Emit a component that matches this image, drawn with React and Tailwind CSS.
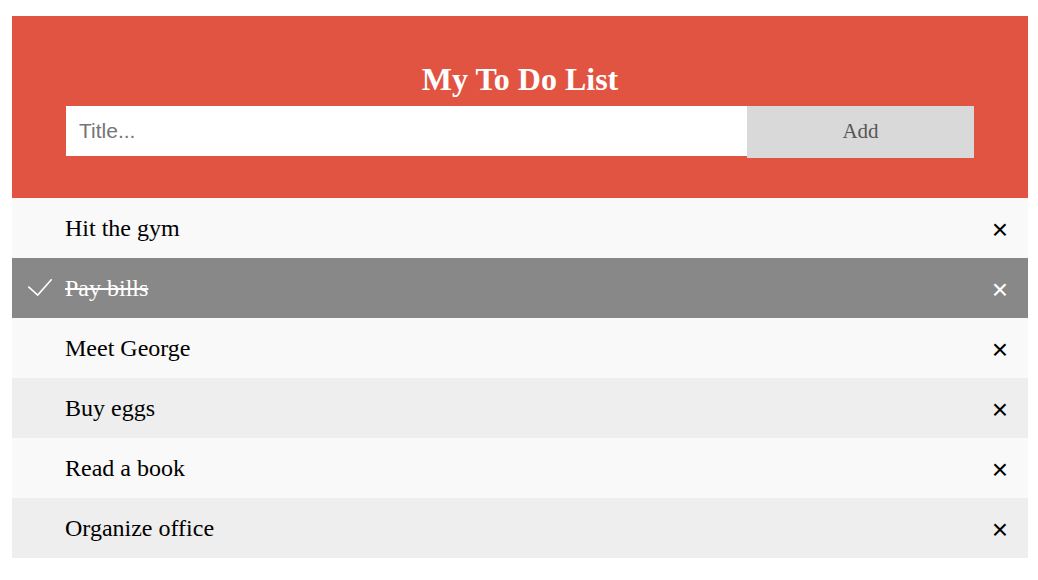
const TODOS = [
  { title: 'Hit the gym', done: false },
  { title: 'Pay bills', done: true },
  { title: 'Meet George', done: false },
  { title: 'Buy eggs', done: false },
  { title: 'Read a book', done: false },
  { title: 'Organize office', done: false },
]

function Check() {
  return (
    <svg width="53" height="60" viewBox="0 0 53 60" className="block">
      <polyline points="16.3,28.7 25.7,37 39.7,21.3" fill="none" stroke="#fff" strokeWidth="1.6" />
    </svg>
  )
}

export default function App() {
  return (
    <div className="ml-[12px] mr-[10px] mt-[16px] font-['Liberation_Serif','Times_New_Roman',serif]">
      <div className="bg-[#e15441] px-[54px] pt-[45px] pb-[40px]">
        <h2 className="text-center text-white text-[32px] font-bold leading-[36px] mb-[9px]">My To Do List</h2>
        <div className="flex items-start">
          <input
            type="text"
            placeholder="Title..."
            className="w-3/4 h-[50px] bg-white px-[13px] text-[21px] font-['Liberation_Sans',Arial,sans-serif] text-black placeholder:text-[#757575] outline-none"
          />
          <button className="w-1/4 h-[52px] bg-[#d9d9d9] text-[#555] text-[21px]">Add</button>
        </div>
      </div>
      <ul>
        {TODOS.map((t, i) => (
          <li
            key={t.title}
            className={`h-[60px] flex items-center text-[24px] ${
              t.done ? 'bg-[#888] text-white' : i % 2 === 0 ? 'bg-[#f9f9f9] text-black' : 'bg-[#eee] text-black'
            }`}
          >
            <span className="w-[53px] h-[60px] shrink-0">{t.done && <Check />}</span>
            <span className={`flex-1 ${t.done ? 'line-through' : ''}`}>{t.title}</span>
            <span className="pr-[20px] pt-[3px] text-[28px] leading-none font-['Liberation_Sans',Arial,sans-serif]">×</span>
          </li>
        ))}
      </ul>
    </div>
  )
}
